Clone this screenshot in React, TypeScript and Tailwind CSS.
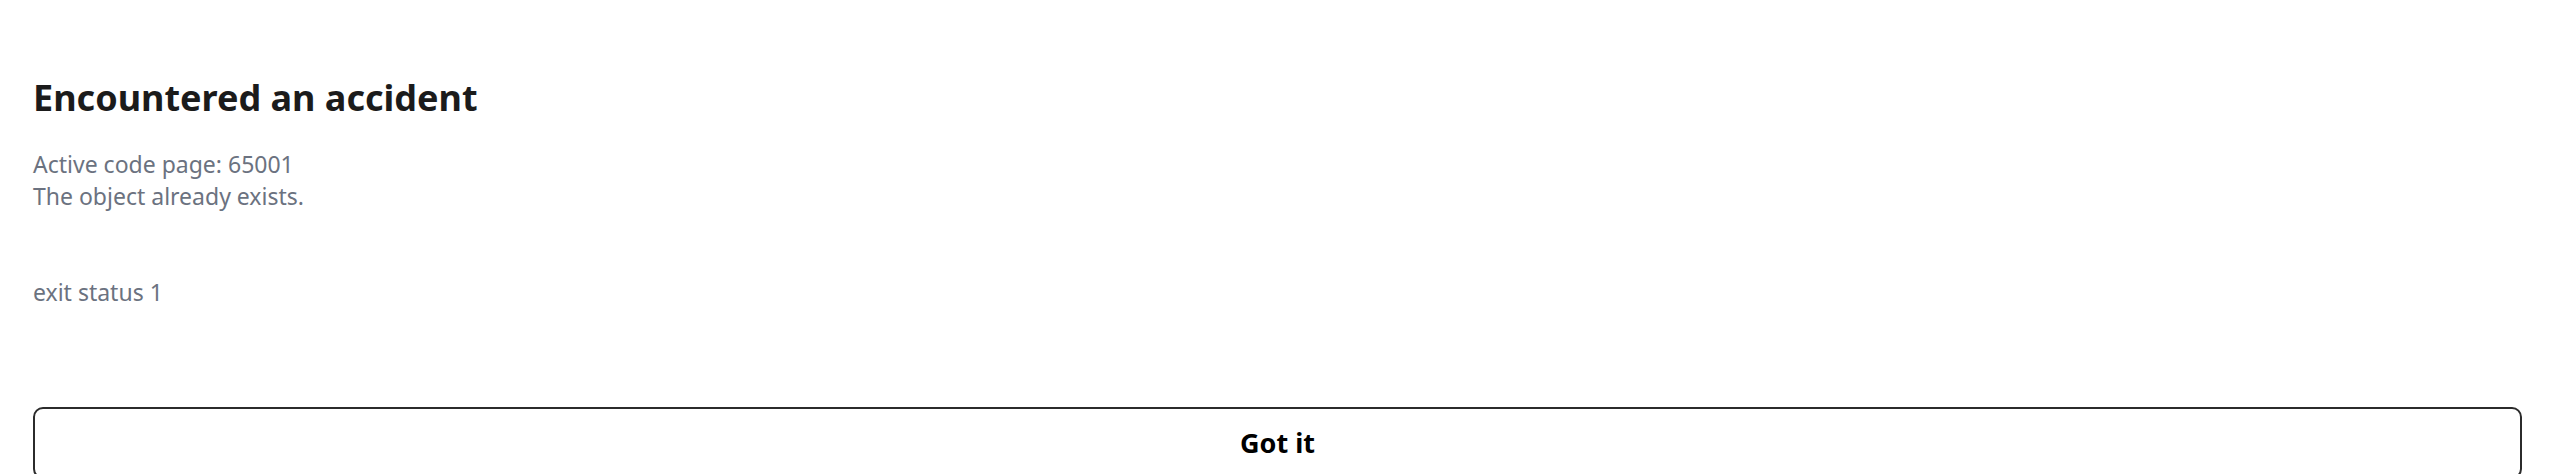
export default function App() {
  const output = "Active code page: 65001\nThe object already exists.\n\n\nexit status 1";

  return (
    <div className="min-h-screen bg-white pl-[33px] pr-[30px] pt-[73px] font-['Noto_Sans',sans-serif]">
      <h1 className="text-[36px] font-bold leading-[50px] text-[#1b1b1b]">Encountered an accident</h1>
      <div className="mt-[25px] whitespace-pre-wrap text-[23px] leading-[32px] text-[#6b7280]">{output}</div>
      <button className="mt-[99px] flex h-[72px] w-full items-center justify-center rounded-[10px] border-2 border-[#2b2b2b] bg-white text-[27px] font-bold text-black">
        Got it
      </button>
    </div>
  );
}
